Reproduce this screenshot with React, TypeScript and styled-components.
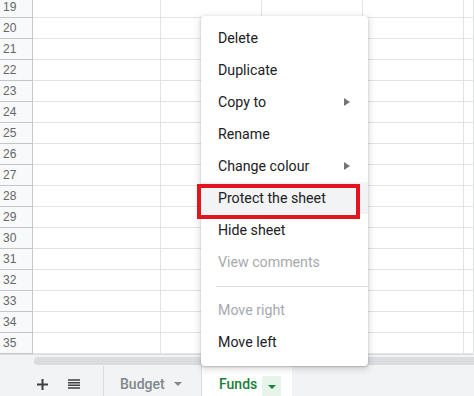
import styled, { createGlobalStyle } from "styled-components";

const GlobalStyle = createGlobalStyle`
  html, body {
    margin: 0;
    padding: 0;
    background: #ffffff;
  }
  body {
    font-family: Roboto, "Liberation Sans", Arial, sans-serif;
  }
`;

const rows = Array.from({ length: 17 }, (_, i) => 19 + i);

const menuItems: { label: string; sub?: boolean; disabled?: boolean; marked?: boolean; divider?: boolean }[] = [
  { label: "Delete" },
  { label: "Duplicate" },
  { label: "Copy to", sub: true },
  { label: "Rename" },
  { label: "Change colour", sub: true },
  { label: "Protect the sheet", marked: true },
  { label: "Hide sheet" },
  { label: "View comments", disabled: true, divider: true },
  { label: "Move right", disabled: true },
  { label: "Move left" },
];

function App() {
  return (
    <>
      <GlobalStyle />
      <Page>
        <SheetArea>
          <Grid>
            {rows.map((n) => (
              <Row key={n}>
                <RowHeader>{n}</RowHeader>
                <Cell />
                <Cell />
                <Cell />
                <Cell />
                <Cell />
              </Row>
            ))}
          </Grid>
        </SheetArea>
        <ScrollStrip>
          <Thumb />
        </ScrollStrip>
        <TabBar>
          <IconButton aria-label="Add sheet">
            <svg width="11" height="11" viewBox="0 0 11 11">
              <path d="M5.5 0v11M0 5.5h11" stroke="#3c4043" strokeWidth="2" />
            </svg>
          </IconButton>
          <IconButton aria-label="All sheets">
            <svg width="12" height="10" viewBox="0 0 12 10">
              <path d="M0 1h12M0 3.7h12M0 6.3h12M0 9h12" stroke="#3c4043" strokeWidth="1.6" />
            </svg>
          </IconButton>
          <TabDivider />
          <Tab>
            <TabLabel>Budget</TabLabel>
            <TabArrow>
              <svg width="8" height="4" viewBox="0 0 8 4">
                <path d="M0 0h8L4 4z" fill="#80868b" />
              </svg>
            </TabArrow>
          </Tab>
          <Tab $active>
            <TabLabel $active>Funds</TabLabel>
            <TabArrow $active>
              <svg width="8" height="4" viewBox="0 0 8 4">
                <path d="M0 0h8L4 4z" fill="#188038" />
              </svg>
            </TabArrow>
          </Tab>
        </TabBar>

        <Menu>
          {menuItems.map((item) => (
            <MenuGroup key={item.label}>
              <MenuItem $disabled={item.disabled} $marked={item.marked}>
                <span>{item.label}</span>
                {item.sub && (
                  <svg width="6" height="8" viewBox="0 0 6 8">
                    <path d="M0 0l6 4-6 4z" fill="#757575" />
                  </svg>
                )}
                {item.marked && <Highlight />}
              </MenuItem>
              {item.divider && <MenuDivider />}
            </MenuGroup>
          ))}
        </Menu>
      </Page>
    </>
  );
}

export default App;

const Page = styled.div`
  position: relative;
  width: 474px;
  height: 396px;
  overflow: hidden;
  display: flex;
  flex-direction: column;
`;

const SheetArea = styled.div`
  height: 354px;
  overflow: hidden;
  flex-shrink: 0;
`;

const Grid = styled.div`
  margin-top: -3px;
  display: flex;
  flex-direction: column;
`;

const Row = styled.div`
  display: grid;
  grid-template-columns: 33px 128px 101px 101px 101px 1fr;
  height: 21px;
`;

const RowHeader = styled.div`
  box-sizing: border-box;
  background: #f8f9fa;
  border-right: 1px solid #c4c7c5;
  border-bottom: 1px solid #c4c7c5;
  color: #666666;
  font-family: "Liberation Sans", Arial, sans-serif;
  font-size: 12px;
  line-height: 20px;
  padding-left: 3px;
`;

const Cell = styled.div`
  box-sizing: border-box;
  border-right: 1px solid #e2e3e3;
  border-bottom: 1px solid #e2e3e3;
`;

const ScrollStrip = styled.div`
  height: 12px;
  flex-shrink: 0;
  box-sizing: border-box;
  background: #f1f3f4;
  border-top: 1px solid #dadce0;
  display: flex;
  align-items: center;
  padding-left: 34px;
`;

const Thumb = styled.div`
  flex: 1;
  height: 8px;
  border-radius: 4px 0 0 4px;
  background: #dadce0;
`;

const TabBar = styled.div`
  height: 30px;
  flex-shrink: 0;
  background: #f1f3f4;
  display: flex;
  align-items: stretch;
  padding-left: 26px;
`;

const IconButton = styled.button`
  border: none;
  background: transparent;
  padding: 0;
  width: 32px;
  display: flex;
  align-items: center;
  justify-content: center;
  svg {
    display: block;
    margin-top: 6px;
  }
`;

const TabDivider = styled.div`
  width: 1px;
  background: #dadce0;
  margin-left: 13px;
`;

const Tab = styled.div<{ $active?: boolean }>`
  display: flex;
  align-items: center;
  box-sizing: border-box;
  width: ${(p) => (p.$active ? "90px" : "98px")};
  padding-left: ${(p) => (p.$active ? "17px" : "16px")};
  background: ${(p) => (p.$active ? "#ffffff" : "transparent")};
  border-right: ${(p) => (p.$active ? "none" : "1px solid #dadce0")};
`;

const TabLabel = styled.span<{ $active?: boolean }>`
  font-size: 14px;
  font-weight: 500;
  color: ${(p) => (p.$active ? "#188038" : "#80868b")};
  padding-top: 6px;
`;

const TabArrow = styled.span<{ $active?: boolean }>`
  align-self: ${(p) => (p.$active ? "flex-end" : "center")};
  display: flex;
  align-items: center;
  justify-content: center;
  width: ${(p) => (p.$active ? "19px" : "8px")};
  height: ${(p) => (p.$active ? "20px" : "auto")};
  margin-left: ${(p) => (p.$active ? "5px" : "9px")};
  background: ${(p) => (p.$active ? "#e6f4ea" : "transparent")};
  svg {
    display: block;
    margin-top: ${(p) => (p.$active ? "2px" : "6px")};
  }
`;

const Menu = styled.div`
  position: absolute;
  left: 201px;
  top: 16px;
  width: 167px;
  box-sizing: border-box;
  padding: 6px 0 8px;
  background: #ffffff;
  border-radius: 4px;
  box-shadow: 0 2px 6px 2px rgba(60, 64, 67, 0.15), 0 1px 2px rgba(60, 64, 67, 0.3);
  z-index: 5;
`;

const MenuGroup = styled.div`
  display: flex;
  flex-direction: column;
`;

const MenuItem = styled.div<{ $disabled?: boolean; $marked?: boolean }>`
  position: relative;
  height: 32px;
  display: flex;
  align-items: center;
  justify-content: space-between;
  padding: 0 18px 0 17px;
  font-size: 14.2px;
  color: ${(p) => (p.$disabled ? "#a6a9ad" : "#202124")};
  background: ${(p) => (p.$marked ? "#f1f3f4" : "transparent")};
  svg {
    display: block;
  }
`;

const Highlight = styled.div`
  position: absolute;
  left: -4px;
  right: 8px;
  top: 2px;
  bottom: -5px;
  border: 4px solid #e3141f;
`;

const MenuDivider = styled.div`
  height: 1px;
  background: #dadce0;
  margin: 8px 0 7px 15px;
`;
